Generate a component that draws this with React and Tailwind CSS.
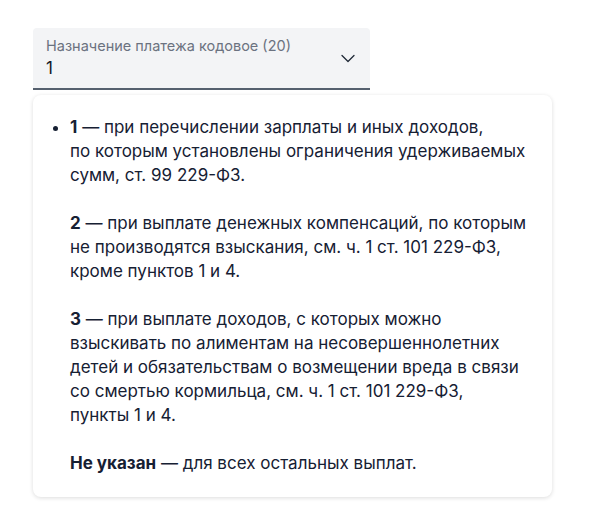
import React from 'react';

const ChevronDown = () => (
  <svg viewBox="0 0 16 16" fill="none" stroke="#1f2937" strokeWidth={1.3} className="w-4 h-4">
    <path d="M2 5.5l6 6 6-6" strokeLinecap="round" strokeLinejoin="round" />
  </svg>
);

const App = () => {
  return (
    <div className="w-[590px] h-[524px] bg-white pt-[28px] pl-[33px]" style={{ fontFamily: 'Inter, "Noto Sans", sans-serif' }}>
      <div className="w-[337px] h-[62px] bg-[#f3f4f6] rounded-t-[4px] border-b-2 border-[#55606e] flex items-center pl-[13px] pr-[14px]">
        <div className="flex-1">
          <div className="text-[14.5px] leading-[18px] text-[#6b7280]">Назначение платежа кодовое (20)</div>
          <div className="text-[17px] leading-[22px] text-[#111827] mt-[2px]">1</div>
        </div>
        <ChevronDown />
      </div>

      <div className="mt-[5px] w-[519px] rounded-[8px] bg-white shadow-[0_1px_4px_rgba(0,0,0,0.14)] pt-[20px] pb-[22px] pl-[16px] pr-[12px]">
        <ul className="list-disc pl-[21px] text-[17px] leading-[24px] text-[#162033] whitespace-nowrap marker:text-[#162033]">
          <li>
            <p>
              <b className="font-bold">1</b> — при перечислении зарплаты и иных доходов,<br />
              по которым установлены ограничения удерживаемых<br />
              сумм, ст. 99 229-ФЗ.
            </p>
            <p className="mt-[24px]">
              <b className="font-bold">2</b> — при выплате денежных компенсаций, по которым<br />
              не производятся взыскания, см. ч. 1 ст. 101 229-ФЗ,<br />
              кроме пунктов 1 и 4.
            </p>
            <p className="mt-[24px]">
              <b className="font-bold">3</b> — при выплате доходов, с которых можно<br />
              взыскивать по алиментам на несовершеннолетних<br />
              детей и обязательствам о возмещении вреда в связи<br />
              со смертью кормильца, см. ч. 1 ст. 101 229-ФЗ,<br />
              пункты 1 и 4.
            </p>
            <p className="mt-[24px]">
              <b className="font-bold">Не указан</b> — для всех остальных выплат.
            </p>
          </li>
        </ul>
      </div>
    </div>
  );
};

export default App;
